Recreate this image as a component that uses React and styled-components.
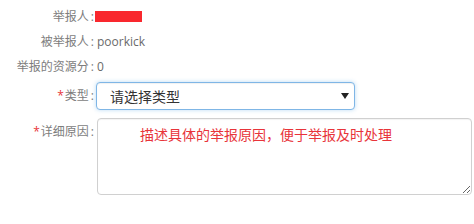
import React from "react";
import styled, { createGlobalStyle } from "styled-components";

const Global = createGlobalStyle`
  html, body { margin: 0; padding: 0; background: #fff; }
  body { font-family: "Open Sans", "Noto Sans CJK SC", sans-serif; }
`;

const Form = styled.div`
  display: flex;
  flex-direction: column;
  padding-top: 4px;
  width: 474px;
`;

const Row = styled.div`
  display: flex;
  align-items: ${(p) => (p.$top ? "flex-start" : "center")};
  height: ${(p) => p.$h || "25px"};
  margin-top: ${(p) => p.$mt || "0"};
`;

const Label = styled.div`
  width: 94px;
  flex: none;
  text-align: right;
  font-size: 12px;
  color: #7d7d7d;
  line-height: ${(p) => p.$lh || "25px"};
  white-space: nowrap;
`;

const Star = styled.span`
  color: #e8343a;
  margin-right: 1px;
`;

const Colon = styled.span`
  margin-left: 2px;
`;

const Value = styled.div`
  margin-left: 3px;
  font-size: 12px;
  color: #6a6a6a;
  line-height: 25px;
`;

const Redacted = styled.div`
  margin-left: 1px;
  width: 47px;
  height: 11px;
  background: #f9282e;
`;

const SelectWrap = styled.div`
  position: relative;
  margin-left: 2px;
  width: 259px;
  height: 28px;
`;

const Select = styled.select`
  appearance: none;
  -webkit-appearance: none;
  box-sizing: border-box;
  width: 100%;
  height: 100%;
  border: 1px solid #7fb6e6;
  border-radius: 4px;
  box-shadow: 0 0 4px rgba(102, 175, 233, 0.45), inset 0 1px 1px rgba(0,0,0,0.06);
  background: #fff;
  padding: 0 0 0 13px;
  font-family: "Noto Sans CJK SC", sans-serif;
  font-size: 14px;
  color: #333;
  outline: none;
`;

const Arrow = styled.svg`
  position: absolute;
  right: 6px;
  top: 11px;
  pointer-events: none;
`;

const TextArea = styled.textarea`
  box-sizing: border-box;
  margin-left: 3px;
  width: 375px;
  height: 77px;
  border: 1px solid #d0d0d0;
  border-radius: 4px;
  box-shadow: inset 0 1px 1px rgba(0,0,0,0.05);
  padding: 5px 10px 4px 42px;
  font-family: "Noto Sans CJK SC", sans-serif;
  font-size: 14px;
  line-height: 20px;
  color: #333;
  outline: none;
  &::placeholder {
    color: #e8343a;
    opacity: 1;
  }
`;

export default function App() {
  return (
    <>
      <Global />
      <Form>
        <Row>
          <Label>举报人<Colon>:</Colon></Label>
          <Redacted />
        </Row>
        <Row>
          <Label>被举报人<Colon>:</Colon></Label>
          <Value>poorkick</Value>
        </Row>
        <Row>
          <Label>举报的资源分<Colon>:</Colon></Label>
          <Value>0</Value>
        </Row>
        <Row $h="28px" $mt="3px">
          <Label $lh="28px"><Star>*</Star>类型<Colon>:</Colon></Label>
          <SelectWrap>
            <Select defaultValue="">
              <option value="">请选择类型</option>
            </Select>
            <Arrow width="8" height="6" viewBox="0 0 8 6">
              <path d="M0 0 H8 L4 6 Z" fill="#222" />
            </Arrow>
          </SelectWrap>
        </Row>
        <Row $top $h="77px" $mt="8px">
          <Label $lh="28px"><Star>*</Star>详细原因<Colon>:</Colon></Label>
          <TextArea placeholder="描述具体的举报原因，便于举报及时处理" />
        </Row>
      </Form>
    </>
  );
}
